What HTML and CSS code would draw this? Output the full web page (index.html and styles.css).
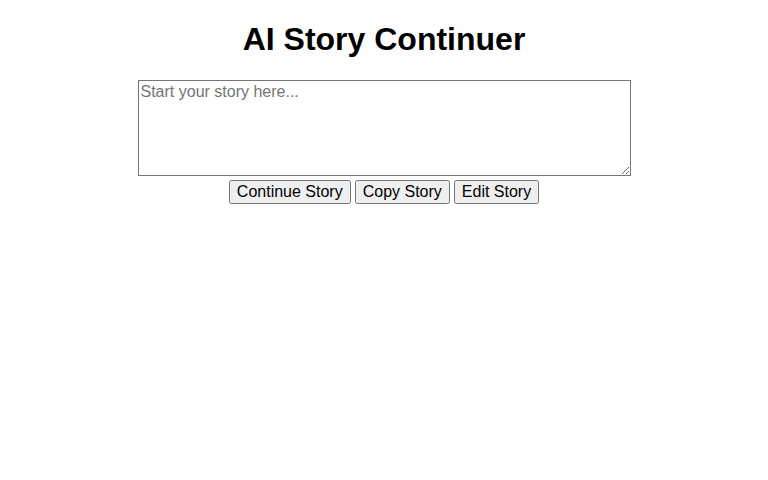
FILE: index.html
```html
<!DOCTYPE html>
<html lang="en">
<head>
    <meta charset="UTF-8">
    <meta name="viewport" content="width=device-width, initial-scale=1.0">
    <title>AI Story Continuer</title>
    <link rel="stylesheet" href="styles.css">
</head>
<body>
    <h1 class="title">AI Story Continuer</h1>

    <div class="story-box">
        <textarea id="story-input" class="story-input" placeholder="Start your story here..."></textarea>
        <div class="button-row">
            <button id="continue-button" class="story-button">Continue Story</button>
            <button id="copy-button" class="story-button">Copy Story</button>
            <button id="edit-button" class="story-button">Edit Story</button>
        </div>
    </div>
</body>
</html>
```

FILE: styles.css
```css
body {
    margin: 8px;
    font-family: "Liberation Sans", Arial, sans-serif;
    background-color: #ffffff;
    color: #000000;
}

.title {
    font-size: 32px;
    font-weight: bold;
    text-align: center;
    margin: 13px 0 22px;
}

.story-box {
    display: flex;
    flex-direction: column;
    align-items: center;
    gap: 4px;
}

.story-input {
    width: 493px;
    height: 96px;
    box-sizing: border-box;
    font-family: "Liberation Sans", Arial, sans-serif;
    font-size: 16px;
    padding: 2px;
    border: 1px solid #767676;
    resize: vertical;
}

.story-input::placeholder {
    color: #757575;
}

.button-row {
    display: flex;
    gap: 4px;
    justify-content: center;
}

.story-button {
    font-family: "Liberation Sans", Arial, sans-serif;
    font-size: 16px;
    padding: 1px 6px;
    height: 24px;
}
```
